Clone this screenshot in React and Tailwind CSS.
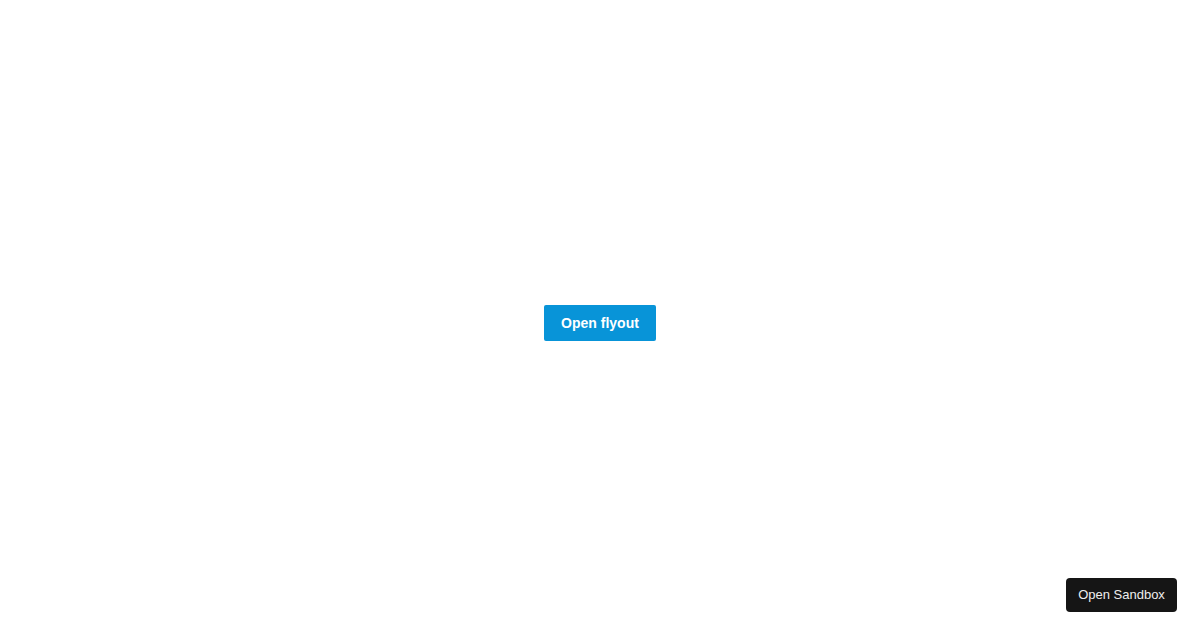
import React from "react";

export default function App() {
  return (
    <div
      className="relative w-full h-[630px] bg-white pt-4 flex items-center justify-center"
      style={{ fontFamily: '"Liberation Sans", Arial, sans-serif' }}
    >
      <button className="w-[112px] h-[36px] bg-[#0894d8] text-white text-[14px] font-bold rounded-[2px]">
        Open flyout
      </button>

      {/* sandbox launcher */}
      <button className="absolute right-[23px] bottom-[18px] w-[111px] h-[34px] bg-[#151515] text-[#eeeeee] text-[13px] rounded-[4px]">
        Open Sandbox
      </button>
    </div>
  );
}
